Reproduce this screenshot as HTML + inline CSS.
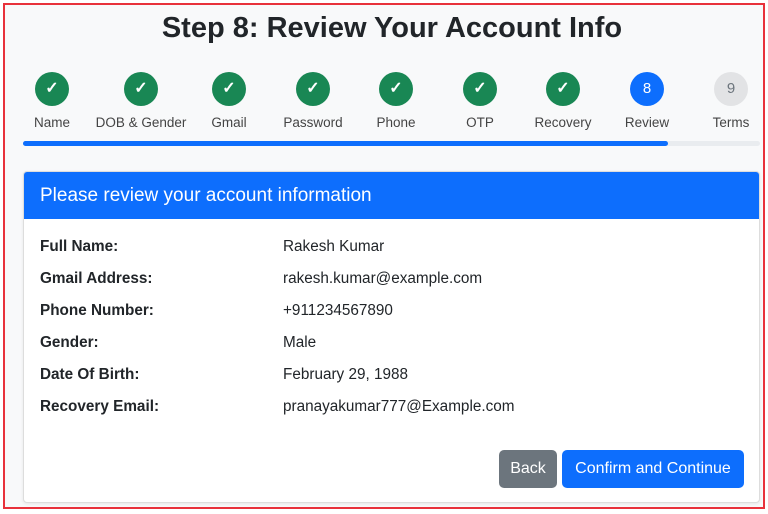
<!DOCTYPE html><html><head><style>
body{margin:0;width:768px;height:514px;background:#fff;font-family:"Liberation Sans",sans-serif;position:relative;overflow:hidden}
.frame{position:absolute;left:3px;top:3px;width:758px;height:502px;border:2px solid #e8313b;background:#f8f9fa}
h1{position:absolute;left:8px;width:768px;top:12px;margin:0;text-align:center;font-size:29px;font-weight:bold;color:#212529}
.c{position:absolute;top:72px;width:34px;height:34px;border-radius:50%;background:#198754;color:#fff;text-align:center;line-height:34px;font-size:16px;font-weight:bold}
.l{position:absolute;top:115px;width:120px;text-align:center;font-size:13.5px;color:#444}
.bar{position:absolute;left:23px;top:141px;width:737px;height:5px;background:#e9ecef;border-radius:3px}
.bar div{width:645px;height:5px;background:#0d6efd;border-radius:3px}
.card{position:absolute;left:23px;top:171px;width:737px;height:332px;background:#fff;border:1px solid #ddd;border-radius:4px;box-sizing:border-box;overflow:hidden;box-shadow:0 1px 3px rgba(0,0,0,.08)}
.hd{height:47px;background:#0d6efd;color:#fff;font-size:19px;line-height:48px;padding-left:16px}
.r{position:absolute;font-size:15.3px;color:#212529}
.k{left:16px;font-weight:bold}.v{left:259px}
.btn{position:absolute;top:450px;height:38px;border-radius:5px;color:#fff;font-size:16px;line-height:38px;text-align:center}
</style></head><body><div class="frame"></div>
<h1>Step 8: Review Your Account Info</h1>
<div class="c" style="left:35px">✓</div><div class="c" style="left:124px">✓</div><div class="c" style="left:212px">✓</div><div class="c" style="left:296px">✓</div><div class="c" style="left:379px">✓</div><div class="c" style="left:463px">✓</div><div class="c" style="left:546px">✓</div>
<div class="c" style="left:630px;background:#0d6efd;font-size:15px;font-weight:normal">8</div>
<div class="c" style="left:714px;background:#e2e3e5;color:#6c757d;font-size:15px;font-weight:normal">9</div>
<div class="l" style="left:-8px">Name</div><div class="l" style="left:81px">DOB &amp; Gender</div><div class="l" style="left:169px">Gmail</div><div class="l" style="left:253px">Password</div><div class="l" style="left:336px">Phone</div><div class="l" style="left:420px">OTP</div><div class="l" style="left:503px">Recovery</div><div class="l" style="left:587px">Review</div><div class="l" style="left:671px">Terms</div>
<div class="bar"><div></div></div>
<div class="card"><div class="hd">Please review your account information</div>
<div class="r k" style="top:66px">Full Name:</div><div class="r v" style="top:66px">Rakesh Kumar</div>
<div class="r k" style="top:98px">Gmail Address:</div><div class="r v" style="top:98px">rakesh.kumar@example.com</div>
<div class="r k" style="top:130px">Phone Number:</div><div class="r v" style="top:130px">+911234567890</div>
<div class="r k" style="top:162px">Gender:</div><div class="r v" style="top:162px">Male</div>
<div class="r k" style="top:194px">Date Of Birth:</div><div class="r v" style="top:194px">February 29, 1988</div>
<div class="r k" style="top:226px">Recovery Email:</div><div class="r v" style="top:226px">pranayakumar777@Example.com</div>
</div>
<div class="btn" style="left:499px;width:58px;background:#6c757d">Back</div>
<div class="btn" style="left:562px;width:182px;background:#0d6efd">Confirm and Continue</div>
</body></html>
